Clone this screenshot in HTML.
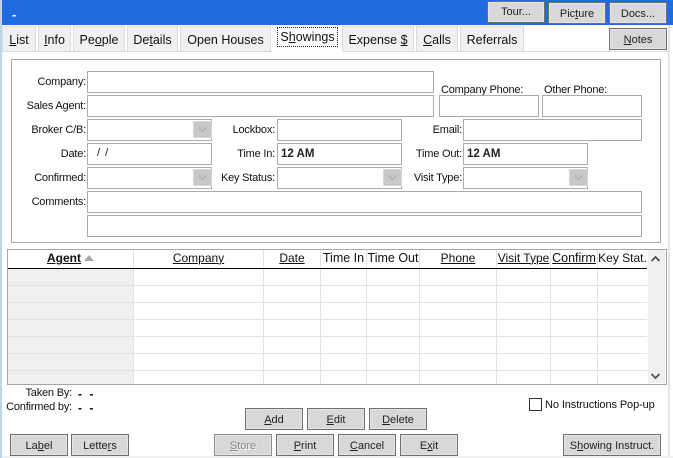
<!DOCTYPE html>
<html><head><meta charset="utf-8"><style>
html,body{margin:0;padding:0;background:#fff}
#p{position:relative;width:673px;height:458px;overflow:hidden;background:#fff;font:11px "Liberation Sans",Arial,sans-serif;color:#111}
#p div{position:absolute;box-sizing:border-box}
.f{border:1px solid #ababab;background:#fff;height:22px}
.l{text-align:right;white-space:nowrap;height:17px;line-height:17px;font-size:11px;letter-spacing:-.2px}
.b{border:1px solid #6f6f6f;background:#d8d8d8;height:22px;width:58px;text-align:center;line-height:22px;font-size:11px;white-space:nowrap;outline:1px solid #e4e4e4;outline-offset:-2px;color:#222}
.t{background:#f0f0f0;border:1px solid #dcdcdc;border-bottom:0;top:26px;height:25px;text-align:center;line-height:26px;font-size:12.5px;white-space:nowrap}
.a{width:19px;height:17px;background:#c8c8c8;border:1px solid #d8d8d8}
.a svg{position:absolute;left:3px;top:3px}
.h{top:250px;height:18px;line-height:17px;text-align:center;white-space:nowrap;font-size:12.5px}
.h u{text-decoration-thickness:1px}
.v{top:250px;width:1px;height:134px;background:#e2e2e2}
.r{left:8px;width:639px;height:1px;background:#e2e2e2}
.bl{font-weight:bold;font-size:11.500px;line-height:20px;padding-left:3px;color:#222}
.d{font-weight:bold;color:#000;font-size:12px;word-spacing:4px;letter-spacing:0;text-align:left}
</style></head><body><div id="p">
<div style="left:0;top:0;width:2px;height:458px;background:#bcd4ee"></div>
<div style="left:2px;top:0;width:671px;height:25px;background:#1f6bdf"></div>
<div style="left:12px;top:8px;height:13px;line-height:13px;font-size:13px;font-weight:bold;color:#fff">-</div>
<div style="left:668px;top:25px;width:2px;height:431px;background:#e6e6e6"></div>
<div style="left:2px;top:51px;width:667px;height:1px;background:#dcdcdc"></div>
<div style="left:2px;top:456px;width:671px;height:2px;background:#f0f0f0"></div>

<div class="b" style="left:487px;top:1px;line-height:20px">Tour...</div>
<div class="b" style="left:548px;top:2px">Pic<u>t</u>ure</div>
<div class="b" style="left:609px;top:2px">Docs...</div>
<div class="b" style="left:609px;top:28px"><u>N</u>otes</div>

<div class="t" style="left:2px;width:34px"><u>L</u>ist</div>
<div class="t" style="left:38px;width:33px"><u>I</u>nfo</div>
<div class="t" style="left:73px;width:52px">Pe<u>o</u>ple</div>
<div class="t" style="left:127px;width:51px">De<u>t</u>ails</div>
<div class="t" style="left:180px;width:91px">Open Houses</div>
<div style="left:272px;top:26px;width:71px;height:26px;background:#fff"></div>
<div style="left:277px;top:27px;width:61px;height:20px;border:1px dotted #222;text-align:center;line-height:19px;font-size:12.5px;white-space:nowrap">S<u>h</u>owings</div>
<div class="t" style="left:342px;width:72px">Expense <u>$</u></div>
<div class="t" style="left:416px;width:42px"><u>C</u>alls</div>
<div class="t" style="left:460px;width:64px">Referrals</div>

<div style="left:11px;top:59px;width:650px;height:184px;border:1px solid #a6a6a6"></div>

<div class="l" style="left:20px;width:66px;top:74px">Company:</div>
<div class="f" style="left:87px;top:71px;width:347px"></div>
<div class="l" style="left:20px;width:66px;top:98px">Sales Agent:</div>
<div class="f" style="left:87px;top:95px;width:347px"></div>
<div class="l" style="left:441px;top:82px">Company Phone:</div>
<div class="l" style="left:544px;top:82px">Other Phone:</div>
<div class="f" style="left:439px;top:95px;width:100px"></div>
<div class="f" style="left:542px;top:95px;width:100px"></div>

<div class="l" style="left:20px;width:66px;top:122px">Broker C/B:</div>
<div class="f" style="left:87px;top:119px;width:125px"></div>
<div class="a" style="left:193px;top:121px"><svg width="11" height="9"><path d="M1.500 2.500L5.500 6.500L9.500 2.500" fill="none" stroke="#a9a9a9"/></svg></div>
<div class="l" style="left:210px;width:65px;top:122px">Lockbox:</div>
<div class="f" style="left:277px;top:119px;width:125px"></div>
<div class="l" style="left:400px;width:62px;top:122px">Email:</div>
<div class="f" style="left:463px;top:119px;width:179px"></div>

<div class="l" style="left:20px;width:66px;top:146px">Date:</div>
<div class="f" style="left:87px;top:143px;width:125px;line-height:18px;padding-left:9px;font-size:11px;word-spacing:2px">/ /</div>
<div class="l" style="left:210px;width:65px;top:146px">Time In:</div>
<div class="f bl" style="left:277px;top:143px;width:125px">12 AM</div>
<div class="l" style="left:400px;width:62px;top:146px">Time Out:</div>
<div class="f bl" style="left:463px;top:143px;width:125px">12 AM</div>

<div class="l" style="left:20px;width:66px;top:170px">Confirmed:</div>
<div class="f" style="left:87px;top:167px;width:125px"></div>
<div class="a" style="left:193px;top:169px"><svg width="11" height="9"><path d="M1.500 2.500L5.500 6.500L9.500 2.500" fill="none" stroke="#a9a9a9"/></svg></div>
<div class="l" style="left:210px;width:65px;top:170px">Key Status:</div>
<div class="f" style="left:277px;top:167px;width:125px"></div>
<div class="a" style="left:383px;top:169px"><svg width="11" height="9"><path d="M1.500 2.500L5.500 6.500L9.500 2.500" fill="none" stroke="#a9a9a9"/></svg></div>
<div class="l" style="left:400px;width:62px;top:170px">Visit Type:</div>
<div class="f" style="left:463px;top:167px;width:125px"></div>
<div class="a" style="left:569px;top:169px"><svg width="11" height="9"><path d="M1.500 2.500L5.500 6.500L9.500 2.500" fill="none" stroke="#a9a9a9"/></svg></div>

<div class="l" style="left:20px;width:66px;top:194px">Comments:</div>
<div class="f" style="left:87px;top:191px;width:555px"></div>
<div class="f" style="left:87px;top:215px;width:555px"></div>

<div style="left:7px;top:249px;width:660px;height:136px;border:1px solid #a6a6a6"></div>
<div style="left:8px;top:269px;width:125px;height:115px;background:#efefef"></div>
<div class="r" style="top:285px"></div>
<div class="r" style="top:302px"></div>
<div class="r" style="top:319px"></div>
<div class="r" style="top:336px"></div>
<div class="r" style="top:353px"></div>
<div class="r" style="top:370px"></div>
<div class="v" style="left:133px"></div>
<div class="v" style="left:263px"></div>
<div class="v" style="left:320px"></div>
<div class="v" style="left:366px"></div>
<div class="v" style="left:419px"></div>
<div class="v" style="left:496px"></div>
<div class="v" style="left:550px"></div>
<div class="v" style="left:597px"></div>
<div style="left:8px;top:268px;width:639px;height:1px;background:#000"></div>

<div class="h" style="left:47px;font-weight:bold;font-size:12px"><u>Agent</u></div>
<svg style="position:absolute;left:84px;top:255px" width="10" height="6"><path d="M0 6L5 0L10 6Z" fill="#a8a8a8"/></svg>
<div class="h" style="left:134px;width:129px;font-size:12px"><u>Company</u></div>
<div class="h" style="left:264px;width:56px;font-size:12px"><u>Date</u></div>
<div class="h" style="left:321px;width:45px">Time In</div>
<div class="h" style="left:367px;width:52px">Time Out</div>
<div class="h" style="left:420px;width:76px;font-size:12px"><u>Phone</u></div>
<div class="h" style="left:497px;width:53px;font-size:12px"><u>Visit Type</u></div>
<div class="h" style="left:551px;width:46px"><u>Confirm</u></div>
<div class="h" style="left:598px;width:49px;font-size:12px">Key Stat.</div>

<div style="left:648px;top:250px;width:17px;height:133px;background:#f0f0f0"></div>
<svg style="position:absolute;left:650px;top:255px" width="11" height="8"><path d="M1.500 6L5.500 2L9.500 6" fill="none" stroke="#505050" stroke-width="1.700"/></svg>
<svg style="position:absolute;left:650px;top:372px" width="11" height="8"><path d="M1.500 2L5.500 6L9.500 2" fill="none" stroke="#505050" stroke-width="1.700"/></svg>

<div class="l" style="left:5px;width:67px;top:385px">Taken By:</div>
<div class="l" style="left:5px;width:67px;top:399px">Confirmed by:</div>
<div class="l d" style="left:78px;top:386px">- -</div>
<div class="l d" style="left:78px;top:400px">- -</div>

<div style="left:529px;top:398px;width:13px;height:13px;border:1px solid #333;background:#fff"></div>
<div class="l" style="left:545px;top:397px;letter-spacing:-.1px">No Instructions Pop-up</div>

<div class="b" style="left:245px;top:408px"><u>A</u>dd</div>
<div class="b" style="left:307px;top:408px"><u>E</u>dit</div>
<div class="b" style="left:369px;top:408px"><u>D</u>elete</div>
<div class="b" style="left:10px;top:434px">La<u>b</u>el</div>
<div class="b" style="left:71px;top:434px">Lette<u>r</u>s</div>
<div class="b" style="left:214px;top:434px;color:#858585;text-shadow:1px 1px 0 #f4f4f4;border-color:#8f8f8f"><u>S</u>tore</div>
<div class="b" style="left:276px;top:434px"><u>P</u>rint</div>
<div class="b" style="left:338px;top:434px"><u>C</u>ancel</div>
<div class="b" style="left:400px;top:434px">E<u>x</u>it</div>
<div class="b" style="left:563px;top:434px;width:98px">S<u>h</u>owing Instruct.</div>
</div></body></html>
